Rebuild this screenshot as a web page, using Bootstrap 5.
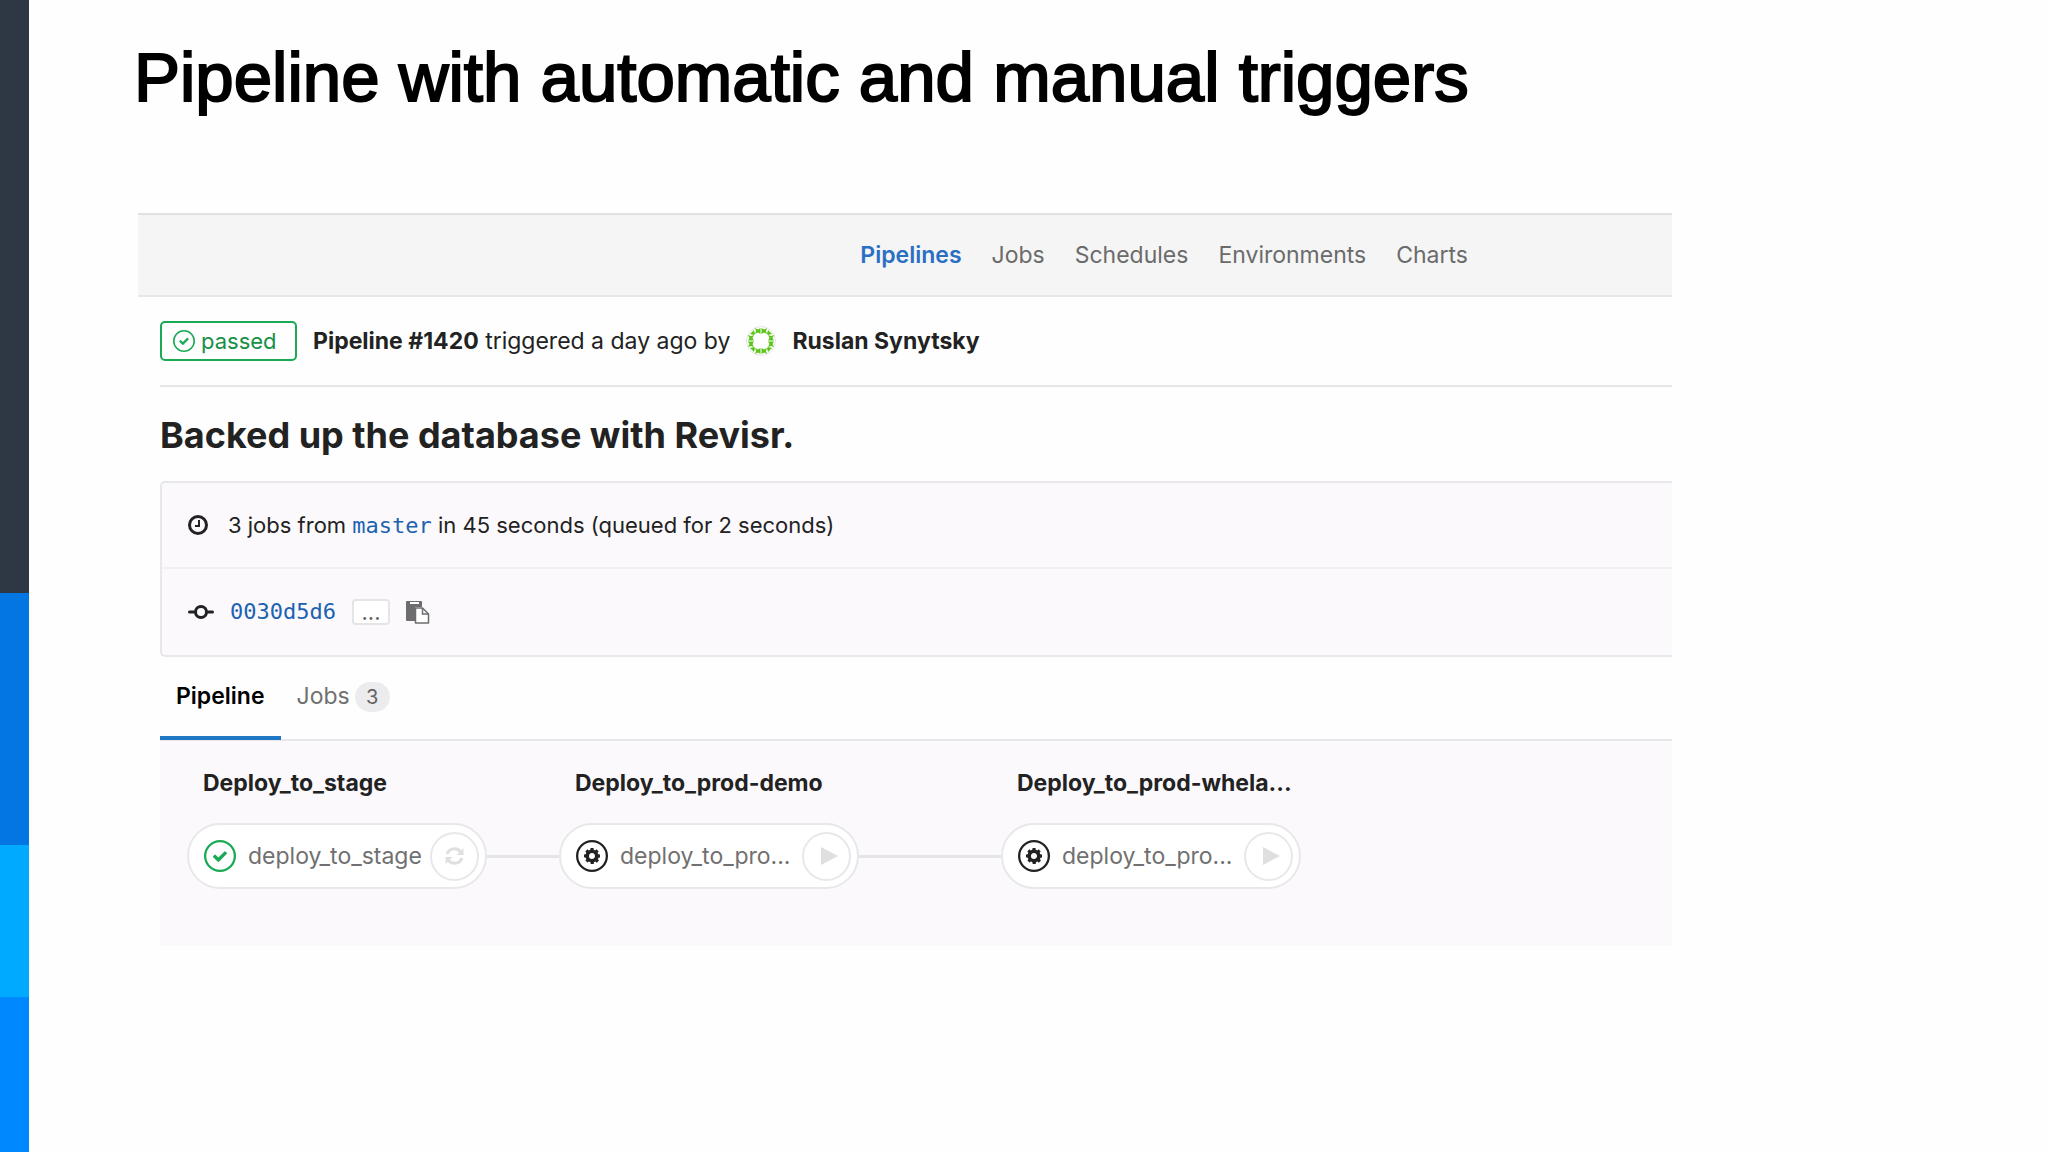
<!DOCTYPE html>
<html lang="en">
<head>
<meta charset="utf-8">
<meta name="viewport" content="width=device-width, initial-scale=1">
<title>Pipeline with automatic and manual triggers</title>
<link href="https://cdn.jsdelivr.net/npm/bootstrap@5.3.0/dist/css/bootstrap.min.css" rel="stylesheet">
<style>
  body { background: #fdfefd; color: #222; font-family: Inter, "Liberation Sans", sans-serif; font-size: 22px; line-height: 32px; }
  a { text-decoration: none; }
  svg { display: block; flex: none; }
  .stripe { flex: 0 0 29px; }
  .stripe-navy { flex: 593 0 0; background: #2d3844; }
  .stripe-blue { flex: 252 0 0; background: #0476e3; }
  .stripe-sky { flex: 152 0 0; background: #00abff; }
  .stripe-azure { flex: 155 0 0; background: #0088ff; }
  .slide { padding: 36px 376px 40px 109px; }
  .slide-title { font-family: "Liberation Sans", Arial, sans-serif; font-size: 69px; line-height: 84px; color: #000; margin: 0 0 93px -4px; -webkit-text-stroke: 2px #000; white-space: nowrap; }
  .top-nav { height: 84px; background: #f4f5f4; border-top: 2px solid #e0e1e0; border-bottom: 2px solid #e6e7e6; padding-right: 204px; gap: 30px; font-size: 23px; }
  .top-nav a { color: #6b6b6b; }
  .top-nav a.active { color: #2a6fc4; font-weight: 600; }
  .content { padding-left: 22px; }
  .run-head { height: 90px; border-bottom: 2px solid #e6e6e8; gap: 16px; font-size: 23px; }
  .status { width: 137px; height: 40px; border: 2px solid #1aaa55; border-radius: 5px; padding-left: 11px; gap: 6px; color: #168f48; font-size: 22px; }
  .ok, .status svg { color: #1aaa55; }
  .commit-title { font-size: 36px; line-height: 48px; font-weight: 700; margin: 24px 0 22px; }
  .facts { background: #fbf9fc; border: 2px solid #e8e7eb; border-right: 0; border-radius: 5px 0 0 5px; }
  .fact { height: 84px; padding-left: 26px; }
  .fact + .fact { height: 88px; border-top: 2px solid #f0eff2; }
  .code-link { font-family: "DejaVu Sans Mono", monospace; font-size: 22px; color: #1b62b0; }
  .more { width: 38px; height: 26px; line-height: 22px; border: 2px solid #e5e4e7; border-radius: 4px; background: #fff; color: #666; padding: 0; font-size: 22px; }
  .copy { border: 0; background: none; padding: 0; color: #6d6d70; }
  .tabs { height: 84px; border-bottom: 2px solid #e7e6ea; font-size: 23px; }
  .tabs .tab { height: 83px; padding: 23px 16px 0; color: #707070; }
  .tabs .tab.active { color: #000; font-weight: 600; border-bottom: 4px solid #1f78c4; }
  .tabs .tab-jobs { gap: 5px; }
  .count { background: #ececee; color: #626262; font-size: 20px; line-height: 30px; width: 35px; height: 30px; border-radius: 15px; text-align: center; margin-top: 2px; }
  .graph { background: #fbf9fc; padding: 26px 0 57px 27px; font-size: 23px; }
  .stage { width: 300px; }
  .stage-name { font-size: 23px; line-height: 32px; font-weight: 700; margin: 0 0 24px 16px; }
  .job { height: 66px; background: #fff; border: 2px solid #e8e7ea; border-radius: 33px; padding: 0 6px 0 15px; }
  .job a { color: #707070; margin: 0 6px 0 12px; min-width: 0; }
  .act { width: 49px; height: 49px; flex: none; border: 2px solid #e8e7ea; border-radius: 50%; background: #fff; color: #dfdee1; padding: 0; }
  .act-run { padding-left: 4px; }
  .wire { height: 3px; background: #e5e4e7; margin-bottom: 31px; }
  .wire-short { width: 72px; }
  .wire-long { width: 142px; }
</style>
<script src="https://cdn.jsdelivr.net/npm/bootstrap@5.3.0/dist/js/bootstrap.bundle.min.js"></script>
</head>
<body>
<svg width="0" height="0" class="position-absolute" aria-hidden="true">
  <symbol id="i-ok" viewBox="0 0 14 14"><circle cx="7" cy="7" r="6.500" fill="none" stroke="currentColor"/><path fill="currentColor" d="M6.278 7.697L5.045 6.464a.296.296 0 0 0-.42-.002l-.613.614a.298.298 0 0 0 .002.42l1.91 1.909a.5.5 0 0 0 .703.005l.265-.265L9.997 6.040a.291.291 0 0 0-.009-.408l-.614-.614a.29.29 0 0 0-.408-.009L6.278 7.697z"/></symbol>
  <symbol id="i-gear" viewBox="0 0 14 14"><circle cx="7" cy="7" r="6.500" fill="none" stroke="currentColor"/><path fill="currentColor" fill-rule="evenodd" d="M10.500 7.630V6.370l-.787-.13c-.044-.175-.132-.349-.263-.61l.481-.652-.918-.913-.657.478a2.346 2.346 0 0 0-.612-.26L7.656 3.500H6.388l-.132.783c-.219.043-.394.13-.612.26l-.657-.478-.918.913.437.652c-.131.218-.175.392-.262.61l-.744.086v1.261l.787.13c.044.218.132.392.263.61l-.438.651.92.913.655-.434c.175.086.394.173.613.26l.131.783h1.313l.131-.783c.219-.043.394-.13.613-.26l.656.478.918-.913-.48-.652c.13-.218.218-.435.262-.61l.656-.13zM7 8.283a1.285 1.285 0 0 1-1.313-1.305c0-.739.57-1.304 1.313-1.304.744 0 1.313.565 1.313 1.304 0 .74-.57 1.305-1.313 1.305z"/></symbol>
  <symbol id="i-play" viewBox="0 0 18 18"><path fill="currentColor" d="M1 0 18 9 1 18z"/></symbol>
</svg>
<div class="d-flex min-vh-100">
  <div class="stripe d-flex flex-column">
    <div class="stripe-navy"></div><div class="stripe-blue"></div><div class="stripe-sky"></div><div class="stripe-azure"></div>
  </div>
  <main class="slide flex-grow-1">
    <h1 class="slide-title fw-normal">Pipeline with automatic and manual triggers</h1>
    <nav class="top-nav d-flex align-items-center justify-content-end">
      <a class="active" href="#">Pipelines</a>
      <a href="#">Jobs</a>
      <a href="#">Schedules</a>
      <a href="#">Environments</a>
      <a href="#">Charts</a>
    </nav>
    <div class="content">
      <div class="run-head d-flex align-items-center">
        <a href="#" class="status d-flex align-items-center">
          <svg width="22" height="22"><use href="#i-ok"/></svg>passed
        </a>
        <div><strong>Pipeline #1420</strong> triggered a day ago by</div>
        <svg width="30" height="30" viewBox="0 0 30 30">
          <circle cx="15" cy="15" r="14.500" fill="#fff" stroke="#e4e4e4"/>
          <g fill="#5cc51c">
            <path id="seg" d="M9 2l3 1.500L14.500 2v6L12 6.500 9 8l1-3zM21 2l-3 1.500L15.500 2v6L18 6.500 21 8l-1-3z"/>
            <use href="#seg" transform="rotate(90 15 15)"/>
            <use href="#seg" transform="rotate(180 15 15)"/>
            <use href="#seg" transform="rotate(270 15 15)"/>
            <path d="M4 8l4-4 1 4-1 1zM26 8l-4-4-1 4 1 1zM4 22l4 4 1-4-1-1zM26 22l-4 4-1-4 1-1z"/>
          </g>
        </svg>
        <strong>Ruslan Synytsky</strong>
      </div>
      <h2 class="commit-title">Backed up the database with Revisr.</h2>
      <div class="facts">
        <div class="fact d-flex align-items-center">
          <svg class="me-3" width="20" height="20" viewBox="0 0 20 20" fill="none" stroke="#222"><circle cx="10" cy="10" r="8.500" stroke-width="3"/><path d="M11 5v6H7" stroke-width="2"/></svg>
          <div class="ms-1">3 jobs from <a href="#" class="code-link">master</a> in 45 seconds (queued for 2 seconds)</div>
        </div>
        <div class="fact d-flex align-items-center">
          <svg width="26" height="16" viewBox="0 0 26 16" fill="none" stroke="#222" stroke-width="3"><circle cx="13" cy="8" r="5.500"/><path d="M1.500 8H7M19 8h5.500" stroke-linecap="round"/></svg>
          <a href="#" class="code-link ms-3 me-3">0030d5d6</a>
          <button type="button" class="more me-3" aria-label="Show full message">...</button>
          <button type="button" class="copy" aria-label="Copy commit SHA">
            <svg width="24" height="24" viewBox="0 0 24 24"><path fill="currentColor" d="M1 1h14a1 1 0 0 1 1 1v5h-6a1 1 0 0 0-1 1v13H1a1 1 0 0 1-1-1V2a1 1 0 0 1 1-1z"/><path fill="#fff" d="M4 2h9v2H4z"/><path fill="#fff" stroke="currentColor" stroke-width="1.500" stroke-linejoin="round" d="M9.500 8H16.500L22.500 14V23H9.500z"/><path fill="none" stroke="currentColor" stroke-width="1.500" d="M16.500 8v6h6"/></svg>
          </button>
        </div>
      </div>
      <div class="tabs d-flex align-items-start">
        <a href="#" class="tab active">Pipeline</a>
        <a href="#" class="tab tab-jobs d-flex">Jobs <span class="count">3</span></a>
      </div>
      <div class="graph d-flex align-items-end">
        <section class="stage">
          <h3 class="stage-name text-truncate">Deploy_to_stage</h3>
          <div class="job d-flex align-items-center">
            <svg class="ok" width="32" height="32"><use href="#i-ok"/></svg>
            <a href="#" class="flex-grow-1 text-nowrap">deploy_to_stage</a>
            <button type="button" class="act d-flex align-items-center justify-content-center" aria-label="Retry">
              <svg width="19" height="18" viewBox="0 0 19 18" fill="none" stroke="currentColor" stroke-width="3"><path d="M2 7C4 1 12 0 16 5M17 11C15 17 7 18 3 13"/><path fill="currentColor" stroke="none" d="M18.500 1v7h-7zM.5 17v-7h7z"/></svg>
            </button>
          </div>
        </section>
        <div class="wire wire-short"></div>
        <section class="stage">
          <h3 class="stage-name text-truncate">Deploy_to_prod-demo</h3>
          <div class="job d-flex align-items-center">
            <svg width="32" height="32"><use href="#i-gear"/></svg>
            <a href="#" class="flex-grow-1 text-nowrap">deploy_to_pro...</a>
            <button type="button" class="act act-run d-flex align-items-center justify-content-center" aria-label="Run"><svg width="18" height="18"><use href="#i-play"/></svg></button>
          </div>
        </section>
        <div class="wire wire-long"></div>
        <section class="stage">
          <h3 class="stage-name text-truncate">Deploy_to_prod-whela...</h3>
          <div class="job d-flex align-items-center">
            <svg width="32" height="32"><use href="#i-gear"/></svg>
            <a href="#" class="flex-grow-1 text-nowrap">deploy_to_pro...</a>
            <button type="button" class="act act-run d-flex align-items-center justify-content-center" aria-label="Run"><svg width="18" height="18"><use href="#i-play"/></svg></button>
          </div>
        </section>
      </div>
    </div>
  </main>
</div>
</body>
</html>
